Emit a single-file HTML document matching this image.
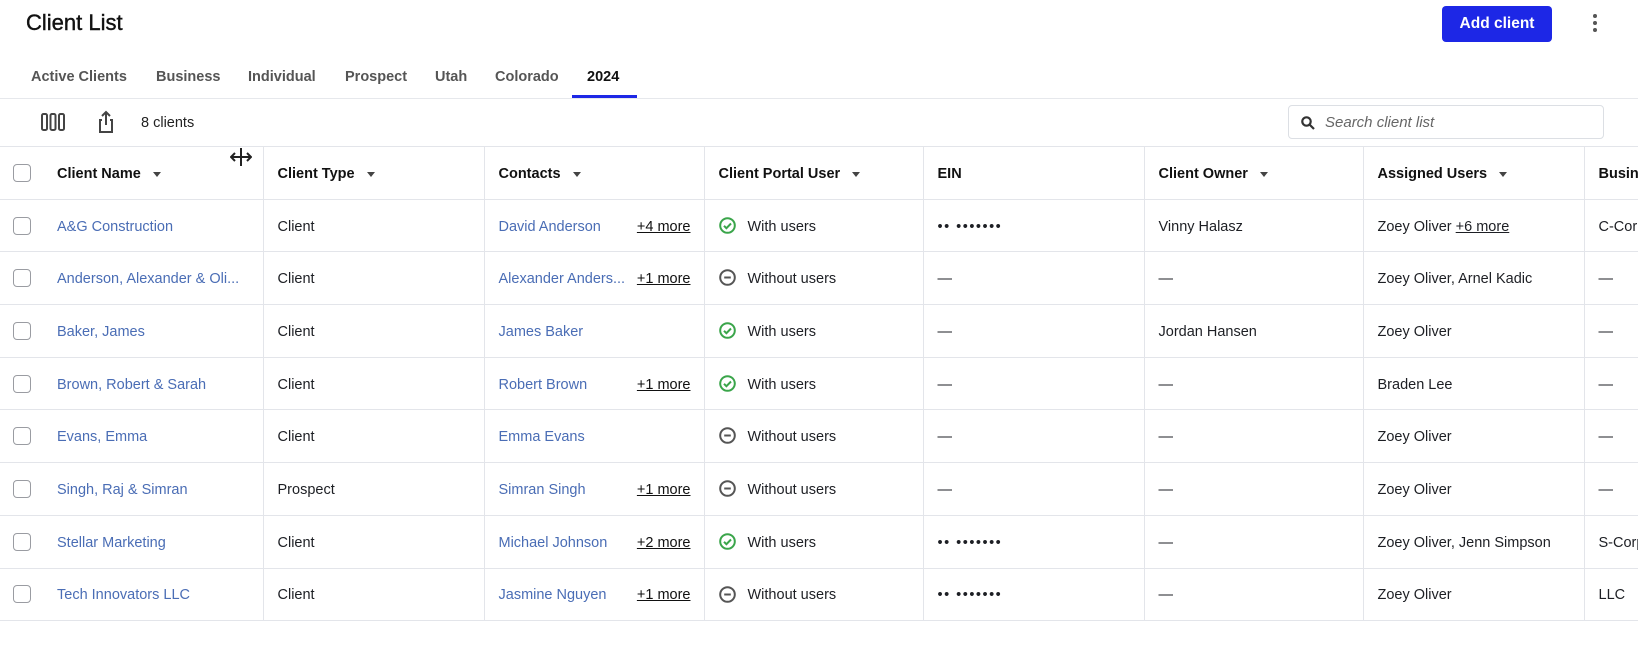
<!DOCTYPE html>
<html><head><meta charset="utf-8"><style>
*{box-sizing:border-box;margin:0;padding:0}
body{width:1638px;height:652px;overflow:hidden;background:#fff;font-family:"Liberation Sans",Arial,sans-serif;color:#1d1f24;position:relative}
.title{position:absolute;left:26px;top:10px;font-size:22px;color:#111;-webkit-text-stroke:0.4px #111}
.btn{position:absolute;left:1442px;top:6px;width:110px;height:36px;background:#1d27e6;border-radius:4px;color:#fff;font-size:15.5px;font-weight:bold;text-align:center;line-height:36px}
.kebab{position:absolute;left:1593px;top:14px;width:4px}
.kebab i{display:block;width:4px;height:4px;border-radius:2px;background:#555;margin-bottom:3px}
.tabs{position:absolute;top:69px;left:0;font-size:14.5px;font-weight:bold;color:#555}
.tabs span{position:absolute;white-space:nowrap}
.ul{position:absolute;left:572px;top:95px;width:65px;height:3px;background:#1d27e6}
.hr{position:absolute;left:0;top:98px;width:1638px;height:1px;background:#e6e8ec}
.tool{position:absolute;top:115px;font-size:14.5px;color:#222}
.search{position:absolute;left:1288px;top:105px;width:316px;height:34px;border:1px solid #dcdfe4;border-radius:4px;font-size:15px;font-style:italic;color:#666;line-height:33px;padding-left:36px}
table{position:absolute;left:0;top:146px;border-collapse:collapse;table-layout:fixed;width:1800px;font-size:14.5px}
td,th{border-top:1px solid #e3e5ea;border-bottom:1px solid #e3e5ea;border-left:1px solid #e3e5ea;height:52.7px;padding-left:14px;padding-top:2px;text-align:left;white-space:nowrap;overflow:hidden}
th{font-weight:bold;color:#111}
td:first-child,th:first-child{border-left:none;padding-left:57px;position:relative}
.cb{position:absolute;left:13px;top:50%;margin-top:-9px;width:18px;height:18px;border:1.5px solid #9a9ca2;border-radius:4px}
.car{display:inline-block;width:0;height:0;border-left:4.5px solid transparent;border-right:4.5px solid transparent;border-top:5px solid #444;margin-left:12px;vertical-align:middle}
a{color:#4a6db5;text-decoration:none}
.more{float:right;margin-right:13px;color:#111;text-decoration:underline}
.un{text-decoration:underline}
.ein{letter-spacing:1.5px}
.ic{display:inline-block;vertical-align:middle;margin-right:12px;margin-top:-3px}
</style></head><body>
<div class="title">Client List</div>
<div class="btn">Add client</div>
<div class="kebab"><i></i><i></i><i></i></div>
<div class="tabs">
<span style="left:31px">Active Clients</span><span style="left:156px">Business</span><span style="left:248px">Individual</span><span style="left:345px">Prospect</span><span style="left:435px">Utah</span><span style="left:495px">Colorado</span><span style="left:587px;color:#111">2024</span>
</div>
<div class="ul"></div><div class="hr"></div>
<svg style="position:absolute;left:41px;top:113px" width="24" height="18" viewBox="0 0 24 18" fill="none" stroke="#444" stroke-width="2"><rect x="1" y="1" width="5" height="16" rx="1.5"/><rect x="9.5" y="1" width="5" height="16" rx="1.5"/><rect x="18" y="1" width="5" height="16" rx="1.5"/></svg>
<svg style="position:absolute;left:97px;top:110px" width="18" height="24" viewBox="0 0 18 24" fill="none" stroke="#444" stroke-width="2"><path d="M9 15V2M5 6l4-4 4 4M5 10H3v12h12V10h-2"/></svg>
<div class="tool" style="left:141px">8 clients</div>
<div class="search"><svg style="position:absolute;left:12px;top:10px" width="14" height="14" viewBox="0 0 14 14" fill="none" stroke="#333" stroke-width="2.2"><circle cx="5.5" cy="5.5" r="4.2"/><path d="M8.5 8.5l4.5 4.5"/></svg>Search client list</div>
<svg style="position:absolute;left:230px;top:147px" width="22" height="20" viewBox="0 0 22 20" fill="none" stroke="#222" stroke-width="2"><path d="M11 1v18M2 10h18M5 6l-4 4 4 4M17 6l4 4-4 4"/></svg>
<table>
<colgroup><col style="width:263px"><col style="width:221px"><col style="width:220px"><col style="width:219px"><col style="width:221px"><col style="width:219px"><col style="width:221px"><col style="width:216px"></colgroup>
<tr><th><span class="cb"></span>Client Name<span class="car"></span></th><th>Client Type<span class="car"></span></th><th>Contacts<span class="car"></span></th><th>Client Portal User<span class="car"></span></th><th>EIN</th><th>Client Owner<span class="car"></span></th><th>Assigned Users<span class="car"></span></th><th>Business</th></tr>
<tr><td><span class="cb"></span><a>A&amp;G Construction</a></td><td>Client</td><td><a>David Anderson</a><span class="more">+4 more</span></td><td><svg class="ic" width="17" height="17" viewBox="0 0 17 17" fill="none" stroke="#3aa54a" stroke-width="2"><circle cx="8.5" cy="8.5" r="7.3"/><path d="M5 8.8l2.4 2.4L12 6.5"/></svg>With users</td><td class="ein">•• •••••••</td><td>Vinny Halasz</td><td>Zoey Oliver <span class="un">+6 more</span></td><td>C-Corp</td></tr>
<tr><td><span class="cb"></span><a>Anderson, Alexander &amp; Oli...</a></td><td>Client</td><td><a>Alexander Anders...</a><span class="more">+1 more</span></td><td><svg class="ic" width="17" height="17" viewBox="0 0 17 17" fill="none" stroke="#555" stroke-width="2"><circle cx="8.5" cy="8.5" r="7.3"/><path d="M5.2 8.5h6.6"/></svg>Without users</td><td>—</td><td>—</td><td>Zoey Oliver, Arnel Kadic</td><td>—</td></tr>
<tr><td><span class="cb"></span><a>Baker, James</a></td><td>Client</td><td><a>James Baker</a></td><td><svg class="ic" width="17" height="17" viewBox="0 0 17 17" fill="none" stroke="#3aa54a" stroke-width="2"><circle cx="8.5" cy="8.5" r="7.3"/><path d="M5 8.8l2.4 2.4L12 6.5"/></svg>With users</td><td>—</td><td>Jordan Hansen</td><td>Zoey Oliver</td><td>—</td></tr>
<tr><td><span class="cb"></span><a>Brown, Robert &amp; Sarah</a></td><td>Client</td><td><a>Robert Brown</a><span class="more">+1 more</span></td><td><svg class="ic" width="17" height="17" viewBox="0 0 17 17" fill="none" stroke="#3aa54a" stroke-width="2"><circle cx="8.5" cy="8.5" r="7.3"/><path d="M5 8.8l2.4 2.4L12 6.5"/></svg>With users</td><td>—</td><td>—</td><td>Braden Lee</td><td>—</td></tr>
<tr><td><span class="cb"></span><a>Evans, Emma</a></td><td>Client</td><td><a>Emma Evans</a></td><td><svg class="ic" width="17" height="17" viewBox="0 0 17 17" fill="none" stroke="#555" stroke-width="2"><circle cx="8.5" cy="8.5" r="7.3"/><path d="M5.2 8.5h6.6"/></svg>Without users</td><td>—</td><td>—</td><td>Zoey Oliver</td><td>—</td></tr>
<tr><td><span class="cb"></span><a>Singh, Raj &amp; Simran</a></td><td>Prospect</td><td><a>Simran Singh</a><span class="more">+1 more</span></td><td><svg class="ic" width="17" height="17" viewBox="0 0 17 17" fill="none" stroke="#555" stroke-width="2"><circle cx="8.5" cy="8.5" r="7.3"/><path d="M5.2 8.5h6.6"/></svg>Without users</td><td>—</td><td>—</td><td>Zoey Oliver</td><td>—</td></tr>
<tr><td><span class="cb"></span><a>Stellar Marketing</a></td><td>Client</td><td><a>Michael Johnson</a><span class="more">+2 more</span></td><td><svg class="ic" width="17" height="17" viewBox="0 0 17 17" fill="none" stroke="#3aa54a" stroke-width="2"><circle cx="8.5" cy="8.5" r="7.3"/><path d="M5 8.8l2.4 2.4L12 6.5"/></svg>With users</td><td class="ein">•• •••••••</td><td>—</td><td>Zoey Oliver, Jenn Simpson</td><td>S-Corp</td></tr>
<tr><td><span class="cb"></span><a>Tech Innovators LLC</a></td><td>Client</td><td><a>Jasmine Nguyen</a><span class="more">+1 more</span></td><td><svg class="ic" width="17" height="17" viewBox="0 0 17 17" fill="none" stroke="#555" stroke-width="2"><circle cx="8.5" cy="8.5" r="7.3"/><path d="M5.2 8.5h6.6"/></svg>Without users</td><td class="ein">•• •••••••</td><td>—</td><td>Zoey Oliver</td><td>LLC</td></tr>
</table>
</body></html>
